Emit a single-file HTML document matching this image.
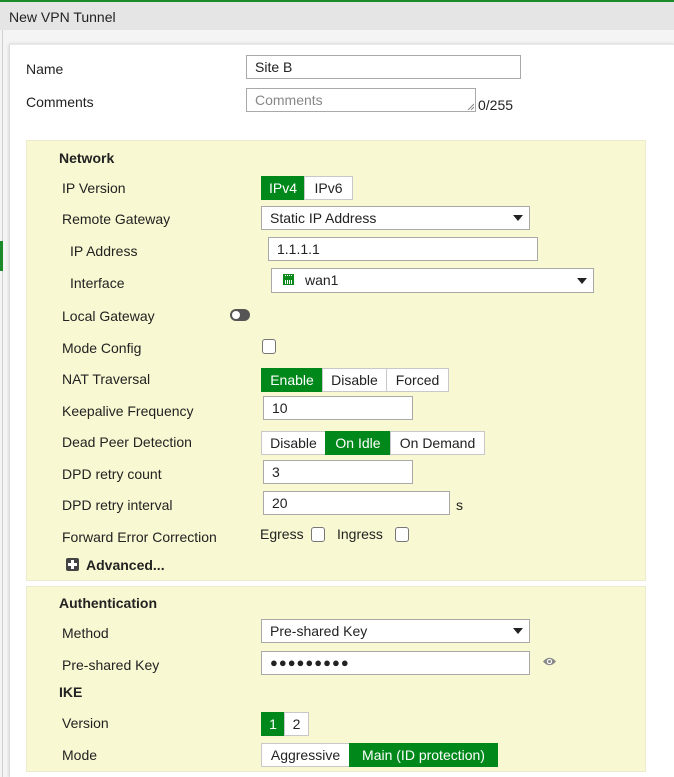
<!DOCTYPE html>
<html><head><meta charset="utf-8"><style>
*{box-sizing:border-box;margin:0;padding:0}
body{width:674px;height:777px;overflow:hidden;background:#f4f4f4;font-family:"Liberation Sans",sans-serif;font-size:14px;color:#222;position:relative}
.a{position:absolute}
.lbl{position:absolute;line-height:16px;white-space:nowrap}
.in{position:absolute;background:#fff;border:1px solid #a9a9a9;padding-left:8px;line-height:22px;white-space:nowrap}
.btn{position:absolute;border:1px solid #c8c8c8;background:#fff;text-align:center;line-height:22px;white-space:nowrap}
.g{background:#00881a;color:#fff;border-color:#00881a}
.sec{position:absolute;left:26px;width:620px;background:#f8f8d2;border:1px solid #ecebd0}
.b{font-weight:bold}
.arr{position:absolute;right:6px;top:8px;width:0;height:0;border-left:5px solid transparent;border-right:5px solid transparent;border-top:6px solid #222}
.cb{position:absolute;width:14px;height:15px;border:1px solid #777;border-radius:3px;background:#fff}
</style></head><body>
<div class="a" style="left:0;top:0;width:674px;height:2px;background:#1a8a2a"></div>
<div class="a" style="left:0;top:2px;width:674px;height:28px;background:#e5e5e5"></div>
<div class="lbl" style="left:9px;top:9px">New VPN Tunnel</div>
<div class="a" style="left:2px;top:30px;width:1px;height:747px;background:#d0d0d0"></div>
<div class="a" style="left:0;top:241px;width:3px;height:30px;background:#1a8a2a"></div>
<div class="a" style="left:9px;top:44px;width:665px;height:733px;background:#fff;border-left:1px solid #ddd;border-top:1px solid #e8e8e8;box-shadow:0 0 3px #ccc"></div>

<div class="lbl" style="left:26px;top:61px">Name</div>
<div class="in" style="left:246px;top:55px;width:275px;height:24px">Site B</div>
<div class="lbl" style="left:26px;top:94px">Comments</div>
<div class="in" style="left:246px;top:88px;width:230px;height:24px;color:#888">Comments
<svg class="a" style="right:1px;bottom:1px" width="7" height="7"><path d="M1 7L7 1M4 7L7 4" stroke="#888" stroke-width="1"/></svg></div>
<div class="lbl" style="left:478px;top:97px">0/255</div>

<div class="sec" style="top:140px;height:441px"></div>
<div class="lbl b" style="left:59px;top:150px">Network</div>
<div class="lbl" style="left:62px;top:180px">IP Version</div>
<div class="btn g" style="left:261px;top:176px;width:44px;height:24px">IPv4</div>
<div class="btn" style="left:304px;top:176px;width:49px;height:24px">IPv6</div>
<div class="lbl" style="left:62px;top:211px">Remote Gateway</div>
<div class="in" style="left:261px;top:206px;width:269px;height:24px">Static IP Address<div class="arr"></div></div>
<div class="lbl" style="left:70px;top:243px">IP Address</div>
<div class="in" style="left:268px;top:237px;width:270px;height:24px">1.1.1.1</div>
<div class="lbl" style="left:70px;top:275px">Interface</div>
<div class="in" style="left:271px;top:268px;width:323px;height:25px;padding-left:33px">wan1<div class="arr" style="top:9px"></div>
<div class="a" style="left:11px;top:5px;width:11px;height:11px;border:1px solid #0a8a1a;background:repeating-linear-gradient(90deg,#0a8a1a 0 1px,#fff 1px 2px)"><div class="a" style="left:1px;top:1px;width:7px;height:4px;background:#0a8a1a"></div></div></div>
<div class="lbl" style="left:62px;top:308px">Local Gateway</div>
<div class="a" style="left:230px;top:309px;width:20px;height:12px;border-radius:6px;background:#555"><div class="a" style="left:2px;top:2px;width:8px;height:8px;border-radius:4px;background:#fff"></div></div>
<div class="lbl" style="left:62px;top:340px">Mode Config</div>
<div class="cb" style="left:262px;top:339px"></div>
<div class="lbl" style="left:62px;top:371px">NAT Traversal</div>
<div class="btn g" style="left:261px;top:368px;width:62px;height:24px">Enable</div>
<div class="btn" style="left:322px;top:368px;width:65px;height:24px">Disable</div>
<div class="btn" style="left:386px;top:368px;width:63px;height:24px">Forced</div>
<div class="lbl" style="left:62px;top:403px">Keepalive Frequency</div>
<div class="in" style="left:263px;top:396px;width:150px;height:24px">10</div>
<div class="lbl" style="left:62px;top:434px">Dead Peer Detection</div>
<div class="btn" style="left:261px;top:431px;width:65px;height:24px">Disable</div>
<div class="btn g" style="left:325px;top:431px;width:66px;height:24px">On Idle</div>
<div class="btn" style="left:390px;top:431px;width:95px;height:24px">On Demand</div>
<div class="lbl" style="left:62px;top:466px">DPD retry count</div>
<div class="in" style="left:263px;top:460px;width:150px;height:24px">3</div>
<div class="lbl" style="left:62px;top:497px">DPD retry interval</div>
<div class="in" style="left:263px;top:491px;width:187px;height:24px">20</div>
<div class="lbl" style="left:456px;top:497px">s</div>
<div class="lbl" style="left:62px;top:529px">Forward Error Correction</div>
<div class="lbl" style="left:260px;top:526px">Egress</div>
<div class="cb" style="left:311px;top:527px"></div>
<div class="lbl" style="left:337px;top:526px">Ingress</div>
<div class="cb" style="left:395px;top:527px"></div>
<div class="a" style="left:66px;top:558px;width:13px;height:13px;border-radius:2px;background:#444"><div class="a" style="left:5px;top:2px;width:3px;height:9px;background:#fff"></div><div class="a" style="left:2px;top:5px;width:9px;height:3px;background:#fff"></div></div>
<div class="lbl b" style="left:86px;top:557px">Advanced...</div>

<div class="sec" style="top:586px;height:186px"></div>
<div class="lbl b" style="left:59px;top:595px">Authentication</div>
<div class="lbl" style="left:62px;top:625px">Method</div>
<div class="in" style="left:261px;top:619px;width:269px;height:24px">Pre-shared Key<div class="arr"></div></div>
<div class="lbl" style="left:62px;top:657px">Pre-shared Key</div>
<div class="in" style="left:261px;top:651px;width:269px;height:24px;letter-spacing:1px;font-size:13px">●●●●●●●●●</div>
<svg class="a" style="left:542px;top:656px" width="15" height="11" viewBox="0 0 15 11"><path d="M1 5.5Q7.5-2 14 5.5Q7.5 13 1 5.5Z" fill="#888"/><circle cx="7.5" cy="5.5" r="2.6" fill="#fff"/><circle cx="7.5" cy="5.5" r="1.5" fill="#888"/></svg>
<div class="lbl b" style="left:59px;top:684px">IKE</div>
<div class="lbl" style="left:62px;top:715px">Version</div>
<div class="btn g" style="left:261px;top:712px;width:24px;height:24px">1</div>
<div class="btn" style="left:284px;top:712px;width:25px;height:24px">2</div>
<div class="lbl" style="left:62px;top:747px">Mode</div>
<div class="btn" style="left:261px;top:743px;width:89px;height:24px">Aggressive</div>
<div class="btn g" style="left:349px;top:743px;width:149px;height:24px">Main (ID protection)</div>
</body></html>
